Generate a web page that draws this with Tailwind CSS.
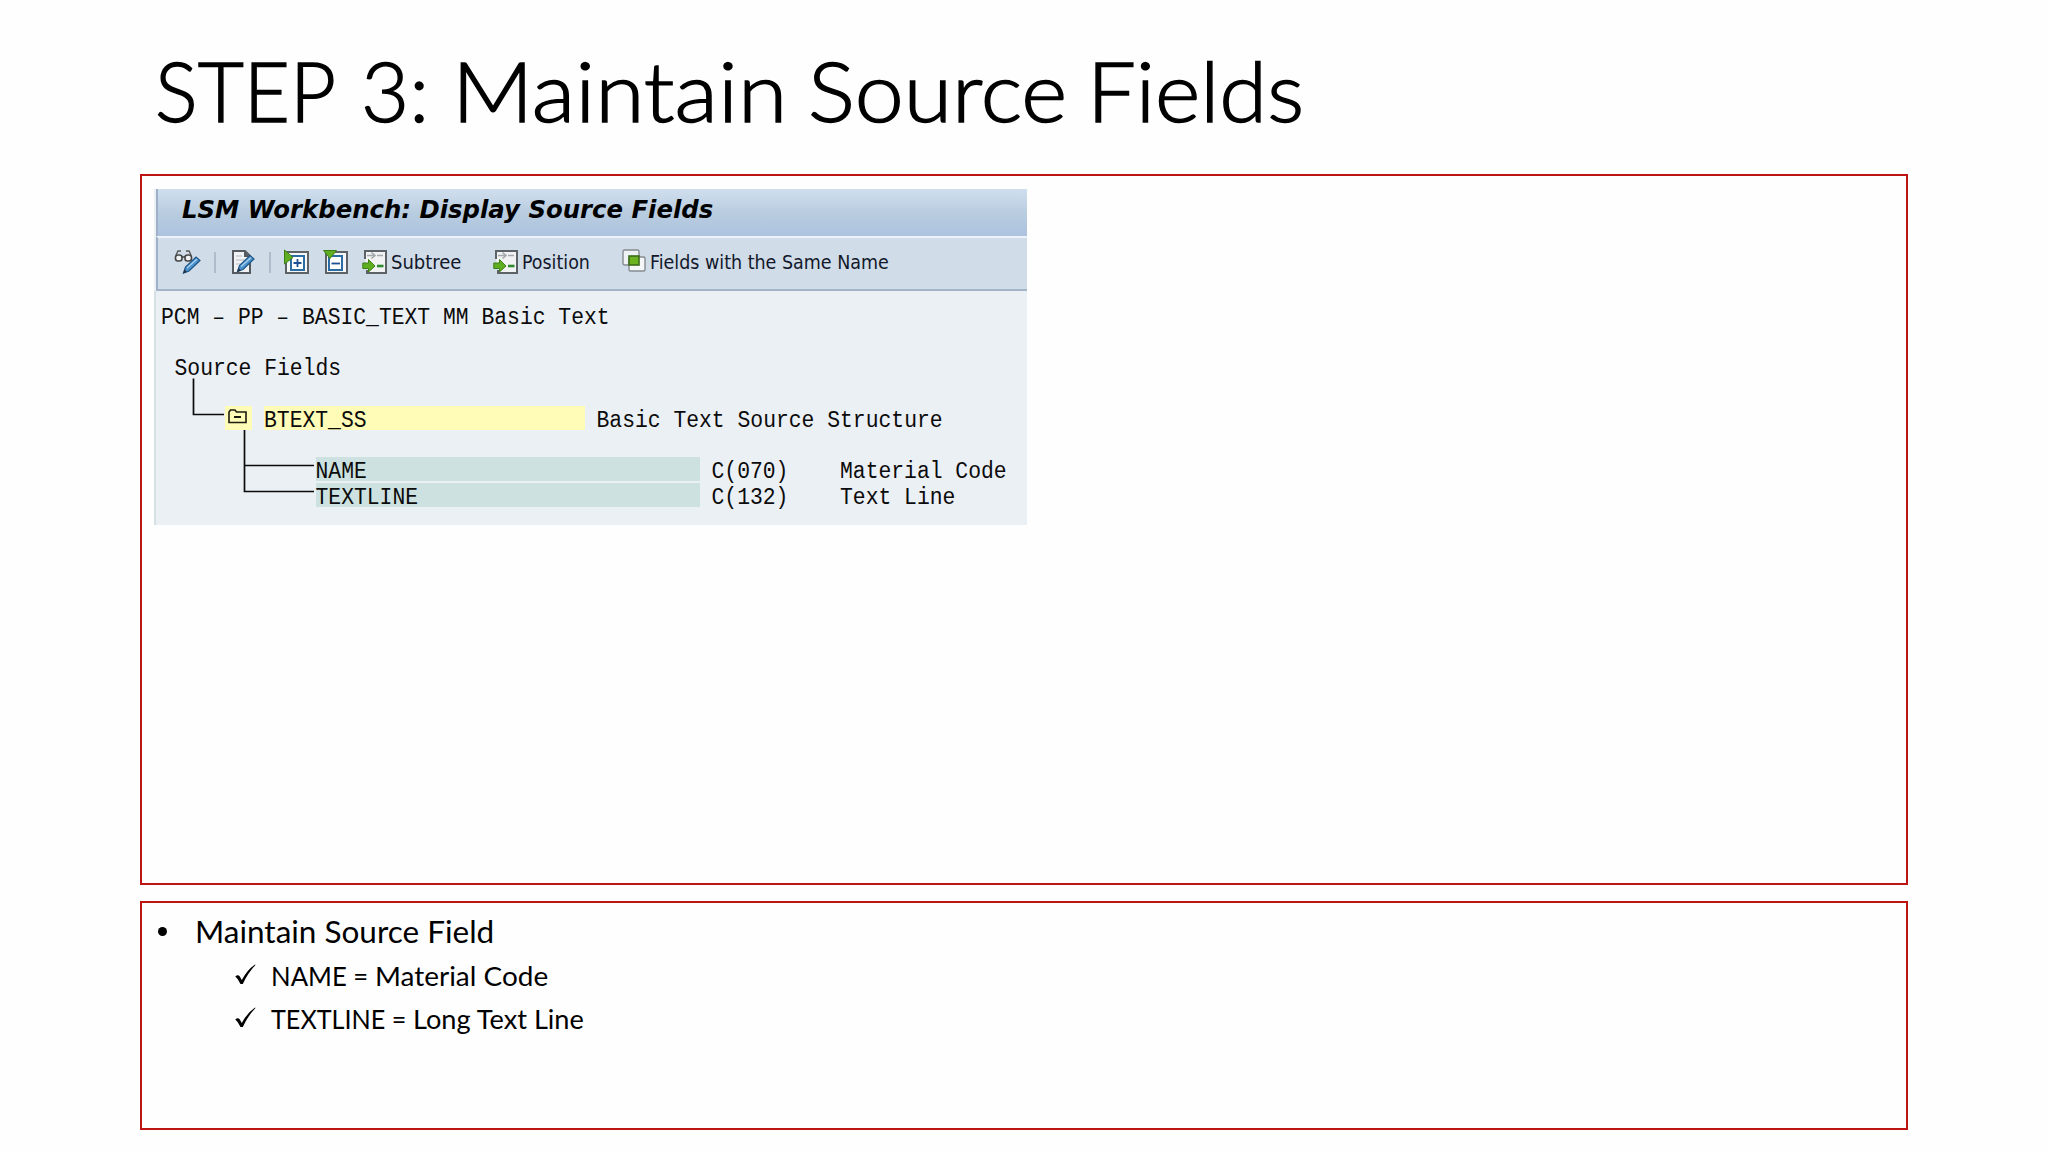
<!DOCTYPE html>
<html lang="en">
<head>
    <meta charset="UTF-8">
    <meta name="viewport" content="width=device-width, initial-scale=1.0">
    <title>STEP 3: Maintain Source Fields</title>
    <script src="https://cdn.jsdelivr.net/npm/@tailwindcss/browser@4"></script>
</head>
<body class="w-[2048px] h-[1152px] overflow-hidden bg-[#fefefe] text-black">
    <div class="pl-[140px] flex flex-col">
        <h1 class="h-[174px] pt-[34.5px] pl-[15px] flex font-['Lato',sans-serif] font-light text-[83px] leading-[110px] whitespace-nowrap [-webkit-text-stroke:1.4px_black]">
            <span class="w-[206px]"><span class="inline-block origin-left scale-x-[0.96]">STEP</span></span>
            <span class="w-[91px]"><span class="inline-block origin-left">3:</span></span>
            <span class="w-[356px]"><span class="inline-block origin-left scale-x-[1.08]">Maintain</span></span>
            <span class="w-[279px]"><span class="inline-block origin-left scale-x-[1.06]">Source</span></span>
            <span><span class="inline-block origin-left scale-x-[1.045]">Fields</span></span>
        </h1>

        <!-- Screenshot area -->
        <div class="w-[1768px] h-[711px] border-2 border-[#bd1414] pl-[12px] pt-[13px]">
            <div class="w-[873px] h-[336px] flex flex-col bg-[#ebf0f5]">
                <div class="ml-[2px] h-[47px] shrink-0 border-l-2 border-[#9fb1c8] bg-linear-to-b from-[#d0dfee] via-[#b9cde0] to-[#adc2de] pl-[23.5px] font-['DejaVu_Sans',sans-serif] font-bold italic text-[25.5px] leading-[40px] whitespace-nowrap"><span class="inline-block origin-left scale-x-[0.955]">LSM Workbench: Display Source Fields</span></div>

                <!-- Toolbar -->
                <div class="ml-[2px] h-[55px] shrink-0 border-l-2 border-l-[#9fb1c8] border-t-2 border-t-[#eef3fa] border-b-2 border-b-[#a3b4c8] bg-[#d0dce8] pl-[16px] pb-[3px] flex items-center font-['DejaVu_Sans_Condensed','DejaVu_Sans',sans-serif] font-stretch-condensed text-[20px] text-[#12182a] whitespace-nowrap">
                    <svg class="w-[28px] h-[26px] shrink-0" viewBox="0 0 28 26" fill="none">
                        <path d="M2 6L4 2h3M17 6l-2-4h-3" stroke="#555" stroke-width="1.4"/>
                        <rect x="1.5" y="6" width="6.5" height="6" rx="2.5" stroke="#444" stroke-width="1.6" fill="#eef2f5"/>
                        <rect x="11" y="6" width="6.5" height="6" rx="2.5" stroke="#444" stroke-width="1.6" fill="#eef2f5"/>
                        <path d="M8 8h3" stroke="#444" stroke-width="1.5"/>
                        <path d="M9.500 24l2-6L22 8l4 3.500L15 22z" fill="#4b93cf" stroke="#1f5585" stroke-width="1.2"/>
                        <path d="M13 19L23 10" stroke="#a8d0ef" stroke-width="1.3"/>
                        <path d="M9 24.500l1.500-4 2.500 2.500z" fill="#234"/>
                    </svg>
                    <span class="ml-[12px] w-[2px] h-[21px] bg-[#b0bccb]"></span>
                    <svg class="ml-[15px] w-[25px] h-[26px] shrink-0" viewBox="0 0 25 26" fill="none">
                        <path d="M2 2h12l5 5v17H2z" fill="#f0f2f3" stroke="#555b60" stroke-width="2"/>
                        <path d="M13 2v6h6z" fill="#555b60"/>
                        <path d="M5 7h6M5 11h9M5 15h5" stroke="#c7cdd2" stroke-width="1.3"/>
                        <path d="M6.500 22.500l2-6L19 6.500l4 3.500L12 20.500z" fill="#4b93cf" stroke="#1f5585" stroke-width="1.2"/>
                        <path d="M10 17.500L20 8.500" stroke="#a8d0ef" stroke-width="1.3"/>
                        <path d="M6 23l1.500-4L10 21.500z" fill="#234"/>
                    </svg>
                    <span class="ml-[13px] w-[2px] h-[21px] bg-[#b0bccb]"></span>
                    <svg class="ml-[13px] w-[26px] h-[26px] shrink-0" viewBox="0 0 26 26" fill="none">
                        <rect x="2" y="3" width="22" height="21" fill="#f4f6f7" stroke="#5d6266" stroke-width="2"/>
                        <rect x="7" y="7" width="13" height="14" fill="#fff" stroke="#2b6ca5" stroke-width="2"/>
                        <path d="M9.500 14h8M13.500 10v8" stroke="#1f4f93" stroke-width="1.800"/>
                        <path d="M.5 1L9 8.500.5 15z" fill="#5fae22" stroke="#3f7f18"/>
                    </svg>
                    <svg class="ml-[13px] w-[26px] h-[26px] shrink-0" viewBox="0 0 26 26" fill="none">
                        <rect x="3" y="3" width="21" height="21" fill="#f4f6f7" stroke="#5d6266" stroke-width="2"/>
                        <rect x="6" y="7" width="13" height="14" fill="#fff" stroke="#2b6ca5" stroke-width="2"/>
                        <path d="M8.500 14.500h8.500" stroke="#1f4f93" stroke-width="1.800"/>
                        <path d="M.5 1.500h13L7 9.500z" fill="#5fae22" stroke="#3f7f18"/>
                    </svg>
                    <svg class="ml-[13px] w-[26px] h-[26px] shrink-0" viewBox="0 0 26 26" fill="none">
                        <path d="M3 10V2h21v22H5v-3" fill="#f0f2f3" stroke="#5d6266" stroke-width="2"/>
                        <path d="M5 6.500h7M15 6.500h6M9.500 3.500l3.500 3-3.500 3" stroke="#a3a9ad" stroke-width="1.600"/>
                        <path d="M15 17h6.500" stroke="#2f8a2c" stroke-width="2.600"/>
                        <path d="M.8 14h5.700v-3.500L13 17l-6.500 6v-3.500H.8z" fill="#5fae22" stroke="#3f7f18"/>
                    </svg>
                    <span class="ml-[3px] w-[102px]"><span class="inline-block origin-left">Subtree</span></span>
                    <svg class="w-[26px] h-[26px] shrink-0" viewBox="0 0 26 26" fill="none">
                        <path d="M3 10V2h21v22H5v-3" fill="#f0f2f3" stroke="#5d6266" stroke-width="2"/>
                        <path d="M5 6.500h7M15 6.500h6M9.500 3.500l3.500 3-3.500 3" stroke="#a3a9ad" stroke-width="1.600"/>
                        <path d="M15 17h6.500" stroke="#2f8a2c" stroke-width="2.600"/>
                        <path d="M.8 14h5.700v-3.500L13 17l-6.500 6v-3.500H.8z" fill="#5fae22" stroke="#3f7f18"/>
                    </svg>
                    <span class="ml-[3px] w-[100px]"><span class="inline-block origin-left scale-x-[0.97]">Position</span></span>
                    <svg class="w-[25px] h-[26px] shrink-0" viewBox="0 0 25 26" fill="none">
                        <rect x="1" y="1" width="16" height="15" rx="1.500" fill="#eef2f5" stroke="#858b90" stroke-width="1.400"/>
                        <rect x="7" y="8" width="16" height="14" rx="1.500" fill="#f4f6f7" stroke="#858b90" stroke-width="1.400"/>
                        <rect x="7" y="7" width="10" height="9" fill="#6cb31f" stroke="#3d6b1c" stroke-width="1.600"/>
                    </svg>
                    <span class="ml-[3px]"><span class="inline-block origin-left scale-x-[0.973]">Fields with the Same Name</span></span>
                </div>

                <!-- Source structure tree -->
                <div class="relative grow border-l-2 border-[#d5e0e4] pt-[12px] font-['Liberation_Mono','DejaVu_Sans_Mono',monospace] text-[21.37px] leading-[25.65px] whitespace-nowrap text-[#0b0b0b]">
                    <div class="h-[51.3px] pl-[5px]"><span class="inline-block translate-y-[2px] scale-y-[1.15]">PCM – PP – BASIC_TEXT MM Basic Text</span></div>
                    <div class="h-[51.3px] pl-[18.5px]"><span class="inline-block translate-y-[2px] scale-y-[1.15]">Source Fields</span></div>
                    <div class="h-[51.3px] pl-[68.5px] flex items-start">
                        <span class="w-[27px] h-[24px] bg-[#fffcb8] flex pt-[3px] pl-[3px]">
                            <svg class="w-[19px] h-[15px]" viewBox="0 0 19 15" fill="none" stroke="#1b1b10" stroke-width="1.600">
                                <path d="M1 13.500V3l1.500-2H7l1.500 2H18v10.500z"/>
                                <path d="M6 8h7" stroke-width="2"/>
                            </svg>
                        </span>
                        <span class="ml-[12.500px] w-[320.5px] h-[24px] bg-[#fffcb8]"><span class="inline-block translate-y-[2px] scale-y-[1.15]">BTEXT_SS</span></span>
                        <span class="ml-[12px] inline-block translate-y-[2px] scale-y-[1.15]">Basic Text Source Structure</span>
                    </div>
                    <div class="h-[25.65px] pl-[159.5px] flex items-start">
                        <span class="w-[384.5px] h-[24px] bg-[#cde2e0]"><span class="inline-block translate-y-[2px] scale-y-[1.15]">NAME</span></span>
                        <span class="ml-[11.500px] w-[128.5px] inline-block translate-y-[2px] scale-y-[1.15]">C(070)</span>
                        <span class="inline-block translate-y-[2px] scale-y-[1.15]">Material Code</span>
                    </div>
                    <div class="h-[25.65px] pl-[159.5px] flex items-start">
                        <span class="w-[384.5px] h-[24px] bg-[#cde2e0]"><span class="inline-block translate-y-[2px] scale-y-[1.15]">TEXTLINE</span></span>
                        <span class="ml-[11.500px] w-[128.5px] inline-block translate-y-[2px] scale-y-[1.15]">C(132)</span>
                        <span class="inline-block translate-y-[2px] scale-y-[1.15]">Text Line</span>
                    </div>
                    <!-- connectors drawn over the rows -->
                    <svg class="absolute left-[-2px] top-0 w-[170px] h-[210px]" viewBox="0 0 170 210" fill="none" stroke="#0b0b0b" stroke-width="1.700">
                        <path d="M39.500 87.500v36H70"/>
                        <path d="M90.500 139v61.500H160M90.500 174.500H160"/>
                    </svg>
                </div>
            </div>
        </div>

        <!-- Notes -->
        <div class="mt-[16px] w-[1768px] h-[229px] border-2 border-[#bd1414] pl-[16px] pt-[5px] font-['Lato',sans-serif] whitespace-nowrap">
            <div class="h-[46px] flex items-center text-[30px]">
                <span class="w-[9px] h-[9px] rounded-full bg-black"></span>
                <span class="ml-[27.5px] inline-block origin-left scale-x-[1.05]">Maintain Source Field</span>
            </div>
            <div class="mt-[1px] h-[43px] pl-[77px] flex items-center text-[26.5px]">
                <svg class="w-[21px] h-[21px] mb-[5px]" viewBox="0 0 21 21"><path d="M.3 12.500Q3 9.800 4.800 12.500L6.800 16Q12 6 20 .5L20.500 1Q12.800 9 7.800 20H5.500Q3 14.500.3 12.500z"/></svg>
                <span class="ml-[15px] w-[98px]"><span class="inline-block origin-left scale-x-[0.97]">NAME =</span></span>
                <span class="ml-[6px] inline-block origin-left scale-x-[1.055]">Material Code</span>
            </div>
            <div class="h-[43px] pl-[77px] flex items-center text-[26.5px]">
                <svg class="w-[21px] h-[21px] mb-[5px]" viewBox="0 0 21 21"><path d="M.3 12.500Q3 9.800 4.800 12.500L6.800 16Q12 6 20 .5L20.500 1Q12.800 9 7.800 20H5.500Q3 14.500.3 12.500z"/></svg>
                <span class="ml-[15px] w-[136px]"><span class="inline-block origin-left scale-x-[0.95]">TEXTLINE =</span></span>
                <span class="ml-[6px] inline-block origin-left scale-x-[1.025]">Long Text Line</span>
            </div>
        </div>
    </div>
</body>
</html>
